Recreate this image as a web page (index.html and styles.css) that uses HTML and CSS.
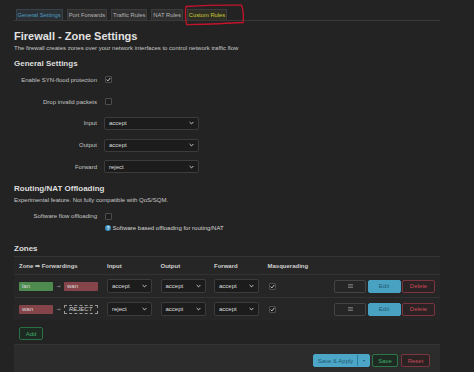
FILE: index.html
```html
<!DOCTYPE html>
<html lang="en">
<head>
    <meta charset="UTF-8">
    <meta name="viewport" content="width=device-width, initial-scale=1.0">
    <title>Firewall - Zone Settings</title>
    <link rel="stylesheet" href="styles.css">
</head>
<body>
    <div class="page">
        <ul class="tabs">
            <li class="tab active">General Settings</li>
            <li class="tab">Port Forwards</li>
            <li class="tab">Traffic Rules</li>
            <li class="tab">NAT Rules</li>
            <li class="tab custom">Custom Rules</li>
        </ul>
        <svg class="mark" width="64" height="22" viewBox="0 0 64 22">
            <path d="M3 2.5 C20 1.5 42 0.8 58.5 1.2 C60 5 60.6 12 60.2 18.5 C42 19.6 20 20.2 3.6 20.6 C2.4 15 2.2 8 3 2.5 Z" fill="none" stroke="#c4142c" stroke-width="1.3"/>
        </svg>

        <h2 class="title">Firewall - Zone Settings</h2>
        <p class="desc">The firewall creates zones over your network interfaces to control network traffic flow</p>

        <h3 class="section general">General Settings</h3>
        <div class="field">
            <label>Enable SYN-flood protection</label>
            <span class="check"><svg width="5" height="5" viewBox="0 0 5 5"><path d="M0.6 2.6 L1.9 3.9 L4.4 0.9" fill="none" stroke="#ddd" stroke-width="0.9"/></svg></span>
        </div>
        <div class="field">
            <label>Drop invalid packets</label>
            <span class="check"></span>
        </div>
        <div class="field">
            <label>Input</label>
            <div class="select wide"><span>accept</span><svg width="5" height="4" viewBox="0 0 5 4"><path d="M0.6 1 L2.5 2.9 L4.4 1" fill="none" stroke="#ddd" stroke-width="0.9"/></svg></div>
        </div>
        <div class="field">
            <label>Output</label>
            <div class="select wide"><span>accept</span><svg width="5" height="4" viewBox="0 0 5 4"><path d="M0.6 1 L2.5 2.9 L4.4 1" fill="none" stroke="#ddd" stroke-width="0.9"/></svg></div>
        </div>
        <div class="field">
            <label>Forward</label>
            <div class="select wide"><span>reject</span><svg width="5" height="4" viewBox="0 0 5 4"><path d="M0.6 1 L2.5 2.9 L4.4 1" fill="none" stroke="#ddd" stroke-width="0.9"/></svg></div>
        </div>

        <h3 class="section routing">Routing/NAT Offloading</h3>
        <p class="desc note">Experimental feature. Not fully compatible with QoS/SQM.</p>
        <div class="field short">
            <label>Software flow offloading</label>
            <span class="check"></span>
        </div>
        <div class="help">
            <span class="help-icon">?</span>
            <span>Software based offloading for routing/NAT</span>
        </div>

        <h3 class="section zones">Zones</h3>
        <div class="table">
            <div class="tr head">
                <div class="td zone">Zone ⇒ Forwardings</div>
                <div class="td col">Input</div>
                <div class="td col">Output</div>
                <div class="td col">Forward</div>
                <div class="td masq">Masquerading</div>
            </div>
            <div class="tr">
                <div class="td zone">
                    <span class="badge lan">lan</span>
                    <span class="arrow">⇒</span>
                    <span class="badge wan">wan</span>
                </div>
                <div class="td col"><div class="select"><span>accept</span><svg width="5" height="4" viewBox="0 0 5 4"><path d="M0.6 1 L2.5 2.9 L4.4 1" fill="none" stroke="#ddd" stroke-width="0.9"/></svg></div></div>
                <div class="td col"><div class="select"><span>accept</span><svg width="5" height="4" viewBox="0 0 5 4"><path d="M0.6 1 L2.5 2.9 L4.4 1" fill="none" stroke="#ddd" stroke-width="0.9"/></svg></div></div>
                <div class="td col"><div class="select"><span>accept</span><svg width="5" height="4" viewBox="0 0 5 4"><path d="M0.6 1 L2.5 2.9 L4.4 1" fill="none" stroke="#ddd" stroke-width="0.9"/></svg></div></div>
                <div class="td masq"><span class="check"><svg width="5" height="5" viewBox="0 0 5 5"><path d="M0.6 2.6 L1.9 3.9 L4.4 0.9" fill="none" stroke="#ddd" stroke-width="0.9"/></svg></span></div>
                <div class="td actions">
                    <span class="btn btn-drag"><svg width="5" height="4" viewBox="0 0 5 4"><path d="M0 0.5 H5 M0 2 H5 M0 3.5 H5" stroke="#9a9a9a" stroke-width="0.6"/></svg></span>
                    <span class="btn btn-edit">Edit</span>
                    <span class="btn btn-delete">Delete</span>
                </div>
            </div>
            <div class="tr">
                <div class="td zone">
                    <span class="badge wan">wan</span>
                    <span class="arrow">⇒</span>
                    <span class="badge reject">REJECT</span>
                </div>
                <div class="td col"><div class="select"><span>reject</span><svg width="5" height="4" viewBox="0 0 5 4"><path d="M0.6 1 L2.5 2.9 L4.4 1" fill="none" stroke="#ddd" stroke-width="0.9"/></svg></div></div>
                <div class="td col"><div class="select"><span>accept</span><svg width="5" height="4" viewBox="0 0 5 4"><path d="M0.6 1 L2.5 2.9 L4.4 1" fill="none" stroke="#ddd" stroke-width="0.9"/></svg></div></div>
                <div class="td col"><div class="select"><span>accept</span><svg width="5" height="4" viewBox="0 0 5 4"><path d="M0.6 1 L2.5 2.9 L4.4 1" fill="none" stroke="#ddd" stroke-width="0.9"/></svg></div></div>
                <div class="td masq"><span class="check"><svg width="5" height="5" viewBox="0 0 5 5"><path d="M0.6 2.6 L1.9 3.9 L4.4 0.9" fill="none" stroke="#ddd" stroke-width="0.9"/></svg></span></div>
                <div class="td actions">
                    <span class="btn btn-drag"><svg width="5" height="4" viewBox="0 0 5 4"><path d="M0 0.5 H5 M0 2 H5 M0 3.5 H5" stroke="#9a9a9a" stroke-width="0.6"/></svg></span>
                    <span class="btn btn-edit">Edit</span>
                    <span class="btn btn-delete">Delete</span>
                </div>
            </div>
        </div>
        <div class="add-row">
            <span class="btn btn-add">Add</span>
        </div>

        <div class="footer">
            <span class="btn btn-apply"><span class="apply-main">Save &amp; Apply</span><span class="apply-more">▾</span></span>
            <span class="btn btn-save">Save</span>
            <span class="btn btn-reset">Reset</span>
        </div>
    </div>
</body>
</html>
```

FILE: styles.css
```css
body {
    margin: 0;
    background-color: #232323;
    color: #cfcfcf;
    font-family: "Liberation Sans", Arial, sans-serif;
    font-size: 6px;
    height: 372px;
    overflow: hidden;
}
.page {
    position: relative;
    width: 426px;
    padding-left: 14px;
}
.tabs {
    list-style: none;
    margin: 0;
    padding: 9px 0 0 1.5px;
    display: flex;
    gap: 4px;
    border-bottom: 1px solid #393939;
}
.tab {
    height: 10px;
    line-height: 10px;
    padding: 0 1px;
    font-size: 5.8px;
    color: #b5b5b5;
    background: #303030;
    border: 1px solid #3c3c3c;
    border-bottom: none;
    border-radius: 1px 1px 0 0;
}
.tab.active {
    color: #4f9dc2;
    background: #2a3034;
    border-color: #37444c;
}
.tab.custom {
    color: #c9c93a;
    background: #2e2e24;
}
.mark {
    position: absolute;
    left: 183px;
    top: 4px;
}
.title {
    margin: 9px 0 0;
    font-size: 11px;
    line-height: 13px;
    color: #e2e2e2;
    font-weight: bold;
}
.desc {
    margin: 1px 0 0;
    font-size: 6px;
    line-height: 8px;
    color: #c8c8c8;
}
.desc.note {
    margin-top: 2px;
}
.section {
    margin: 7px 0 0;
    font-size: 8px;
    line-height: 10px;
    font-weight: bold;
    color: #dedede;
}
.section.routing {
    margin-top: 6.25px;
}
.section.zones {
    margin-top: 11px;
}
.field {
    display: flex;
    align-items: center;
    height: 21.75px;
}
.field.short {
    height: 15px;
    margin-top: 4.5px;
}
.field label {
    width: 83px;
    text-align: right;
    margin-right: 7px;
    color: #c4c4c4;
}
.check {
    display: inline-flex;
    align-items: center;
    justify-content: center;
    width: 5px;
    height: 5px;
    margin-left: 1px;
    border: 1px solid #4c4c4c;
    border-radius: 1px;
    background: #1d1d1d;
}
.select {
    display: flex;
    align-items: center;
    justify-content: space-between;
    box-sizing: border-box;
    width: 45px;
    height: 14px;
    padding: 0 4px;
    border: 1px solid #3c3c3c;
    border-radius: 2px;
    background: #1c1c1c;
    color: #dcdcdc;
}
.select.wide {
    width: 95px;
    height: 13px;
}
.help {
    display: flex;
    align-items: center;
    gap: 1.5px;
    margin: 0 0 0 91px;
    height: 9px;
    color: #d4d4d4;
}
.help-icon {
    display: inline-flex;
    align-items: center;
    justify-content: center;
    width: 6px;
    height: 6px;
    border-radius: 50%;
    background: #3d8fbd;
    color: #fff;
    font-size: 5px;
    font-weight: bold;
}
.table {
    margin-top: 2.5px;
    background: #262626;
    border-top: 1px solid #363636;
}
.tr {
    display: flex;
    align-items: center;
    height: 22px;
    padding: 0 5px;
    border-top: 1px solid #333;
}
.tr.head {
    height: 17px;
    border-top: none;
    font-weight: bold;
    color: #d0d0d0;
}
.td.zone {
    width: 88px;
    display: flex;
    align-items: center;
}
.td.col {
    width: 53.5px;
}
.td.masq {
    flex: 1;
}
.td.actions {
    display: flex;
    gap: 1.5px;
}
.badge {
    box-sizing: border-box;
    width: 34px;
    height: 9px;
    line-height: 9px;
    padding: 0 3px;
    border-radius: 1px;
    color: #d9d9d9;
}
.badge.lan {
    background: #4d8b4f;
}
.badge.wan {
    background: #84444a;
}
.badge.reject {
    border: 1px dashed #9a9a9a;
    line-height: 7px;
    font-style: italic;
    color: #cfcfcf;
    padding-left: 4px;
}
.arrow {
    width: 11px;
    text-align: center;
    font-family: "DejaVu Sans", sans-serif;
    font-size: 5px;
    color: #9a9a9a;
}
.btn {
    display: inline-flex;
    align-items: center;
    justify-content: center;
    box-sizing: border-box;
    height: 13px;
    border: 1px solid #444;
    border-radius: 2px;
    font-size: 6px;
}
.btn-drag {
    width: 32px;
    background: #262626;
}
.btn-edit {
    width: 33px;
    background: #4aa2c3;
    border-color: #4aa2c3;
    color: #225b72;
}
.btn-delete, .btn-reset {
    width: 33px;
    background: #2a2223;
    border-color: #7b3540;
    color: #c94a5a;
}
.add-row {
    display: flex;
    padding: 7px 0 0 5px;
}
.btn-add {
    width: 24px;
    background: #1c2a21;
    border-color: #2c6e45;
    color: #45a86c;
}
.footer {
    display: flex;
    justify-content: flex-end;
    gap: 2px;
    margin-top: 4px;
    height: 40px;
    padding: 9px 10px 0 0;
    box-sizing: border-box;
    background: #2c2c2c;
    border-top: 1px solid #333;
}
.btn-apply {
    width: 57px;
    padding: 0;
    background: #4ba6c8;
    border-color: #4ba6c8;
    color: #235a70;
    overflow: hidden;
}
.apply-main {
    flex: 1;
    text-align: center;
}
.apply-more {
    width: 11px;
    height: 100%;
    display: flex;
    align-items: center;
    justify-content: center;
    border-left: 1px solid #2f7d9b;
    font-size: 4px;
}
.btn-save {
    width: 26px;
    background: #1e2b22;
    border-color: #2d7649;
    color: #3fae6a;
}
.btn-reset {
    width: 29px;
    margin-left: 1px;
}
```
